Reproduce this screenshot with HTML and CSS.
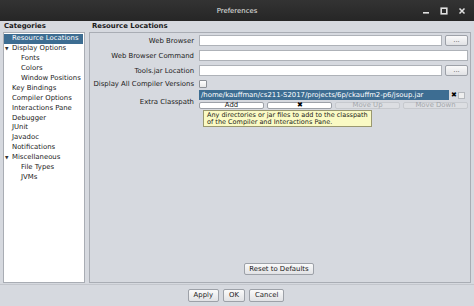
FILE: index.html
```html
<!DOCTYPE html>
<html lang="en">
<head>
  <meta charset="UTF-8">
  <title>Preferences</title>
  <link rel="stylesheet" href="styles.css">
</head>
<body>
  <div class="titlebar">
    <span></span>
    <span class="title">Preferences</span>
    <div class="win-controls">
      <svg width="8" height="8" viewBox="0 0 8 8"><rect x="1" y="5" width="6" height="1.6" fill="#e0e0e0"/></svg>
      <svg width="8" height="8" viewBox="0 0 8 8"><rect x="1.2" y="1.2" width="5.6" height="5.6" fill="none" stroke="#e0e0e0" stroke-width="1.6"/></svg>
      <svg width="8" height="8" viewBox="0 0 8 8"><path d="M1.5 1.5 L6.5 6.5 M6.5 1.5 L1.5 6.5" stroke="#e0e0e0" stroke-width="1.5"/></svg>
    </div>
  </div>

  <div class="main">
    <div class="sidebar">
      <div class="heading">Categories</div>
      <ul class="tree">
        <li class="selected">Resource Locations</li>
        <li><span class="arrow">▼</span>Display Options</li>
        <li class="child">Fonts</li>
        <li class="child">Colors</li>
        <li class="child">Window Positions</li>
        <li>Key Bindings</li>
        <li>Compiler Options</li>
        <li>Interactions Pane</li>
        <li>Debugger</li>
        <li>JUnit</li>
        <li>Javadoc</li>
        <li>Notifications</li>
        <li><span class="arrow">▼</span>Miscellaneous</li>
        <li class="child">File Types</li>
        <li class="child">JVMs</li>
      </ul>
    </div>

    <div class="content">
      <div class="heading">Resource Locations</div>
      <div class="panel">
        <div class="row">
          <label>Web Browser</label>
          <div class="field"><input type="text" class="text"><button class="btn dots">...</button></div>
        </div>
        <div class="row">
          <label>Web Browser Command</label>
          <div class="field"><input type="text" class="text"></div>
        </div>
        <div class="row">
          <label>Tools.jar Location</label>
          <div class="field"><input type="text" class="text"><button class="btn dots">...</button></div>
        </div>
        <div class="row check-row">
          <label>Display All Compiler Versions</label>
          <div class="field"><span class="checkbox"></span></div>
        </div>
        <div class="row classpath-row">
          <label>Extra Classpath</label>
          <div class="field classpath">
            <div class="list">
              <div class="list-item">/home/kauffman/cs211-S2017/projects/6p/ckauffm2-p6/jsoup.jar</div>
              <span class="remove">✖</span>
              <span class="mini"></span>
            </div>
            <div class="list-buttons">
              <button class="btn small">Add</button>
              <button class="btn small"></button>
              <button class="btn small" disabled>Move Up</button>
              <button class="btn small" disabled>Move Down</button>
            </div>
            <span class="cursor">✖</span>
            <div class="tooltip">Any directories or jar files to add to the classpath<br>of the Compiler and Interactions Pane.</div>
          </div>
        </div>
        <div class="reset-wrap">
          <button class="btn reset">Reset to Defaults</button>
        </div>
      </div>
    </div>
  </div>

  <div class="footer">
    <button class="btn foot">Apply</button>
    <button class="btn foot">OK</button>
    <button class="btn foot">Cancel</button>
  </div>
</body>
</html>
```

FILE: styles.css
```css
* { box-sizing: border-box; }

body {
  margin: 0;
  width: 474px;
  height: 306px;
  overflow: hidden;
  background: #d6d9df;
  font-family: "DejaVu Sans", sans-serif;
  font-size: 6.9px;
  color: #1a1a1a;
}

.titlebar {
  height: 21px;
  background: linear-gradient(#333, #262626);
  display: grid;
  grid-template-columns: 1fr auto 1fr;
  align-items: center;
}
.title {
  color: #e6e6e6;
  font-size: 6.9px;
}
.win-controls {
  display: flex;
  justify-content: flex-end;
  gap: 10px;
  padding-right: 8px;
}

.main {
  display: flex;
  height: 263px;
  padding: 0 3px 0 3px;
}

.heading {
  font-weight: bold;
  height: 11px;
  line-height: 9px;
  padding-top: 1px;
}

.sidebar {
  width: 82px;
  display: flex;
  flex-direction: column;
}
.sidebar .heading { padding-left: 1px; }

.tree {
  list-style: none;
  margin: 0;
  padding: 1px 0 0 0;
  flex: 1;
  background: #fff;
  border: 1px solid #a9adb4;
  margin-bottom: 1px;
}
.tree li {
  height: 9.95px;
  line-height: 9.95px;
  padding-left: 8px;
  position: relative;
  white-space: nowrap;
}
.tree li.child { padding-left: 17px; }
.tree li.selected {
  background: #3d6d92;
  color: #fff;
  margin: 0 1px 0 0;
}
.arrow {
  position: absolute;
  left: 1px;
  font-size: 4.5px;
  color: #333;
}

.content {
  flex: 1;
  margin-left: 4px;
  display: flex;
  flex-direction: column;
}
.content .heading { padding-left: 3px; }

.panel {
  flex: 1;
  border: 1px solid #a9adb4;
  margin-bottom: 1px;
  padding: 2px 2px 0 0;
  display: flex;
  flex-direction: column;
}

.row {
  display: flex;
  align-items: center;
  height: 11px;
  margin-bottom: 4px;
}
.row label {
  width: 104px;
  text-align: right;
  margin-right: 5px;
  flex-shrink: 0;
  white-space: nowrap;
}
.field {
  flex: 1;
  display: flex;
  align-items: center;
  height: 100%;
  gap: 2px;
}
.text {
  flex: 1;
  height: 100%;
  border: 1px solid #aeb2b8;
  background: #fff;
  padding: 0;
  margin: 0;
}
.check-row {
  height: 8px;
  margin-bottom: 2px;
}
.checkbox {
  width: 8px;
  height: 8px;
  border: 1px solid #8d9197;
  border-radius: 1px;
  background: linear-gradient(#fff, #e8e8e8);
}

.btn {
  font-family: "DejaVu Sans", sans-serif;
  font-size: 6.9px;
  color: #1a1a1a;
  background: linear-gradient(#fafafa, #e1e2e5);
  border: 1px solid #9da1a8;
  border-radius: 2px;
  padding: 0;
  margin: 0;
  line-height: 1;
}
.btn:disabled {
  color: #a3a6ab;
  background: #dcdee2;
  border-color: #c6c9ce;
}
.dots {
  width: 23px;
  height: 11px;
  color: #666;
  margin-left: 1px;
}

.classpath-row {
  height: 19px;
  align-items: flex-start;
}
.classpath-row label { margin-top: 8px; }
.classpath {
  flex-direction: column;
  align-items: stretch;
  gap: 2px;
  position: relative;
}
.list {
  display: flex;
  align-items: center;
  height: 10px;
}
.list-item {
  width: 250px;
  height: 100%;
  background: #3d6d92;
  color: #fff;
  line-height: 10px;
  padding-left: 2px;
  white-space: nowrap;
  overflow: hidden;
}
.remove {
  font-size: 7px;
  color: #000;
  margin-left: 2px;
}
.mini {
  width: 7px;
  height: 7px;
  border: 1px solid #b5b8bd;
  background: #eee;
  margin-left: 1px;
}
.list-buttons {
  display: flex;
  gap: 3px;
  height: 7px;
}
.small {
  width: 65px;
  height: 7px;
  line-height: 5px;
  background: #fff;
}
.small:disabled { background: #dcdee2; }
.cursor {
  position: absolute;
  left: 98px;
  top: 11px;
  font-size: 7px;
  color: #000;
}
.tooltip {
  position: absolute;
  left: 4px;
  top: 20px;
  width: 169px;
  padding: 1px 3px;
  font-size: 6.5px;
  line-height: 6.6px;
  background: #fafac4;
  border: 1px solid #9a9870;
  white-space: nowrap;
  z-index: 2;
}

.reset-wrap {
  margin-top: auto;
  display: flex;
  justify-content: center;
  padding-bottom: 7px;
}
.reset {
  width: 70px;
  height: 12px;
}

.footer {
  height: 22px;
  display: flex;
  justify-content: center;
  align-items: center;
  gap: 4px;
  padding-right: 2px;
  border-top: 1px solid #c3c6cc;
}
.footer .foot {
  height: 13px;
  padding: 0 5px;
}
```
